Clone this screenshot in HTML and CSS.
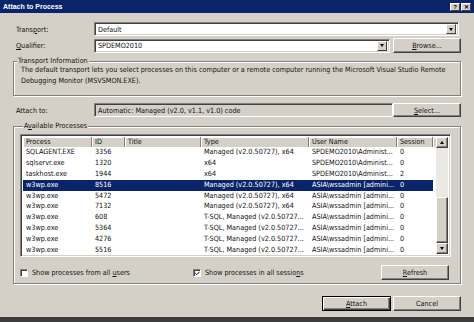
FILE: index.html
```html
<!DOCTYPE html>
<html lang="en">
<head>
    <meta charset="UTF-8">
    <title>Attach to Process</title>
    <link rel="stylesheet" href="styles.css">
</head>
<body>
    <div class="window">
        <div class="titlebar">
            <span class="title">Attach to Process</span>
            <div class="caption-btns">
                <span class="cap-btn">?</span>
                <span class="cap-btn cap-close">&#x2715;</span>
            </div>
        </div>

        <div class="dialog">
            <div class="row row-transport">
                <label class="label">Trans<u>p</u>ort:</label>
                <div class="combo combo-wide">
                    <span class="combo-text">Default</span>
                    <span class="drop"><i class="arrow-down"></i></span>
                </div>
            </div>

            <div class="row row-qualifier">
                <label class="label"><u>Q</u>ualifier:</label>
                <div class="combo combo-short">
                    <span class="combo-text">SPDEMO2010</span>
                    <span class="drop"><i class="arrow-down"></i></span>
                </div>
                <button class="btn"><u>B</u>rowse...</button>
            </div>

            <fieldset class="group group-info">
                <legend>Transport Information</legend>
                <p class="info-text">The default transport lets you select processes on this computer or a remote computer running the Microsoft Visual Studio Remote<br>Debugging Monitor (MSVSMON.EXE).</p>
            </fieldset>

            <div class="row row-attach">
                <label class="label">Attach to:</label>
                <div class="field readonly">Automatic: Managed (v2.0, v1.1, v1.0) code</div>
                <button class="btn btn-select"><u>S</u>elect...</button>
            </div>

            <fieldset class="group group-procs">
                <legend>A<u>v</u>ailable Processes</legend>
                <div class="list">
                    <div class="list-main">
                        <div class="list-head">
                            <span class="hcell">Process</span>
                            <span class="hcell">ID</span>
                            <span class="hcell">Title</span>
                            <span class="hcell">Type</span>
                            <span class="hcell">User Name</span>
                            <span class="hcell">Session</span>
                            <span class="hcell hfill"></span>
                        </div>
                        <div class="list-rows">
                            <div class="lrow"><span>SQLAGENT.EXE</span><span>3356</span><span></span><span>Managed (v2.0.50727), x64</span><span>SPDEMO2010\Administ...</span><span>0</span></div>
                            <div class="lrow"><span>sqlservr.exe</span><span>1320</span><span></span><span>x64</span><span>SPDEMO2010\Administ...</span><span>0</span></div>
                            <div class="lrow"><span>taskhost.exe</span><span>1944</span><span></span><span>x64</span><span>SPDEMO2010\Administ...</span><span>2</span></div>
                            <div class="lrow selected"><span>w3wp.exe</span><span>8516</span><span></span><span>Managed (v2.0.50727), x64</span><span>ASIA\wssadmin [admini...</span><span>0</span></div>
                            <div class="lrow"><span>w3wp.exe</span><span>5472</span><span></span><span>Managed (v2.0.50727), x64</span><span>ASIA\wssadmin [admini...</span><span>0</span></div>
                            <div class="lrow"><span>w3wp.exe</span><span>7132</span><span></span><span>Managed (v2.0.50727), x64</span><span>ASIA\wssadmin [admini...</span><span>0</span></div>
                            <div class="lrow"><span>w3wp.exe</span><span>608</span><span></span><span>T-SQL, Managed (v2.0.50727...</span><span>ASIA\wssadmin [admini...</span><span>0</span></div>
                            <div class="lrow"><span>w3wp.exe</span><span>5364</span><span></span><span>T-SQL, Managed (v2.0.50727...</span><span>ASIA\wssadmin [admini...</span><span>0</span></div>
                            <div class="lrow"><span>w3wp.exe</span><span>4276</span><span></span><span>T-SQL, Managed (v2.0.50727...</span><span>ASIA\wssadmin [admini...</span><span>0</span></div>
                            <div class="lrow"><span>w3wp.exe</span><span>5516</span><span></span><span>T-SQL, Managed (v2.0.50727...</span><span>ASIA\wssadmin [admini...</span><span>0</span></div>
                        </div>
                    </div>
                    <div class="scrollbar">
                        <span class="sb-btn"><i class="arrow-up"></i></span>
                        <span class="sb-track"></span>
                        <span class="sb-thumb"></span>
                        <span class="sb-btn"><i class="arrow-down"></i></span>
                    </div>
                </div>

                <div class="options">
                    <label class="check check-users">
                        <span class="box"></span>
                        <span>Show processes from all <u>u</u>sers</span>
                    </label>
                    <label class="check check-sessions">
                        <span class="box">
                            <svg width="7" height="7" viewBox="0 0 7 7"><path d="M0.5 3 L2.5 5 L6.5 1" fill="none" stroke="#000" stroke-width="1.4"/></svg>
                        </span>
                        <span>Show processes in all sessio<u>n</u>s</span>
                    </label>
                    <button class="btn btn-refresh"><u>R</u>efresh</button>
                </div>
            </fieldset>

            <div class="actions">
                <button class="btn btn-default"><u>A</u>ttach</button>
                <button class="btn">Cancel</button>
            </div>
        </div>

        <div class="frame-bottom"></div>
    </div>
</body>
</html>
```

FILE: styles.css
```css
body {
    margin: 0;
    padding: 0;
    font-family: "DejaVu Sans Condensed", "Liberation Sans", sans-serif;
    font-size: 7.2px;
    color: #111;
    background: #d4d0c8;
}
.window {
    width: 474px;
    height: 322px;
    background: #d4d0c8;
    display: flex;
    flex-direction: column;
    overflow: hidden;
}
.titlebar {
    height: 13px;
    background: #0a246a;
    display: flex;
    align-items: center;
    justify-content: space-between;
    padding: 0 3px 0 3px;
}
.title {
    color: #fff;
    font-family: "Liberation Sans", sans-serif;
    font-weight: bold;
    font-size: 7px;
}
.caption-btns {
    display: flex;
    gap: 1px;
}
.cap-btn {
    width: 10px;
    height: 8px;
    box-sizing: border-box;
    background: #d4d0c8;
    border: 1px solid;
    border-color: #fff #404040 #404040 #fff;
    font-family: "Liberation Sans", sans-serif;
    font-weight: bold;
    font-size: 6px;
    line-height: 6px;
    text-align: center;
    color: #000;
}
.dialog {
    flex: 1;
    padding: 9px 0 0 13px;
    width: 448px;
}
.row {
    display: flex;
    align-items: center;
}
.label {
    width: 78px;
    padding-left: 3px;
}
.row-transport {
    height: 14px;
}
.row-qualifier {
    height: 15px;
    margin-top: 2px;
}
.row-attach {
    height: 14px;
    margin-top: 7px;
}
.combo, .field {
    height: 14px;
    box-sizing: border-box;
    background: #fff;
    border: 1px solid;
    border-color: #808080 #fff #fff #808080;
    box-shadow: inset 1px 1px #404040, inset -1px -1px #d4d0c8;
    display: flex;
    align-items: center;
    padding: 2px 2px 2px 3px;
}
.combo-wide {
    width: 365px;
}
.combo-short {
    width: 296px;
}
.combo-text {
    flex: 1;
}
.drop {
    width: 10px;
    height: 10px;
    box-sizing: border-box;
    background: #d4d0c8;
    border: 1px solid;
    border-color: #fff #404040 #404040 #fff;
    display: flex;
    align-items: center;
    justify-content: center;
}
.arrow-down, .arrow-up {
    width: 0;
    height: 0;
    border-left: 2.5px solid transparent;
    border-right: 2.5px solid transparent;
}
.arrow-down {
    border-top: 3px solid #000;
}
.arrow-up {
    border-bottom: 3px solid #000;
}
.field {
    width: 299px;
}
.field.readonly {
    background: #d4d0c8;
}
.btn {
    font: inherit;
    color: #111;
    height: 15px;
    width: 68px;
    box-sizing: border-box;
    background: #d4d0c8;
    border: 1px solid;
    border-color: #fff #404040 #404040 #fff;
    box-shadow: inset -1px -1px #808080;
    padding: 0;
    margin: 0;
}
.row-qualifier .btn {
    margin-left: 3px;
}
.btn-select {
    height: 14px;
}
.group {
    margin: 0;
    padding: 0;
    min-inline-size: 0;
    width: 448px;
    box-sizing: border-box;
    border: 1px solid #808080;
    box-shadow: inset 1px 1px #fff, 1px 1px #fff;
}
.group legend {
    margin-left: 3px;
    padding: 0 1px;
    line-height: 10px;
    background: #d4d0c8;
}
.group-info {
    margin-top: 3px;
    height: 40px;
}
.info-text {
    margin: -2px 0 0 7px;
    line-height: 11px;
}
.group-procs {
    margin-top: 4px;
    height: 163px;
    padding: 3px 9px 0 6px;
}
.list {
    display: flex;
    height: 123px;
    box-sizing: border-box;
    background: #fff;
    border: 1px solid;
    border-color: #808080 #fff #fff #808080;
    box-shadow: inset 1px 1px #404040, inset -1px -1px #d4d0c8;
    padding: 2px 2px 2px 2px;
}
.list-main {
    flex: 1;
    overflow: hidden;
}
.list-head {
    display: grid;
    grid-template-columns: 69px 33px 76px 108px 88px 36px 1fr;
    height: 10px;
}
.hcell {
    background: #d4d0c8;
    border-right: 1px solid #808080;
    box-shadow: inset 1px 1px #fff;
    padding-left: 3px;
    line-height: 10px;
    white-space: nowrap;
    overflow: hidden;
}
.hfill {
    border-right: none;
}
.lrow {
    display: grid;
    grid-template-columns: 69px 33px 76px 108px 88px 36px;
    height: 10.9px;
    line-height: 10.9px;
    width: 410px;
}
.lrow span {
    padding-left: 3px;
    white-space: nowrap;
    overflow: hidden;
}
.lrow.selected {
    background: #0a246a;
    color: #fff;
}
.scrollbar {
    width: 12px;
    display: flex;
    flex-direction: column;
}
.sb-btn, .sb-thumb {
    box-sizing: border-box;
    background: #d4d0c8;
    border: 1px solid;
    border-color: #fff #404040 #404040 #fff;
    box-shadow: inset -1px -1px #808080;
    display: flex;
    align-items: center;
    justify-content: center;
}
.sb-btn {
    height: 11px;
}
.sb-track {
    height: 49px;
    background: #ebe9e4;
}
.sb-thumb {
    flex: 1;
}
.options {
    display: flex;
    align-items: center;
    height: 15px;
    margin-top: 8px;
}
.check {
    display: flex;
    align-items: center;
    gap: 4px;
}
.check-users {
    width: 173px;
}
.check-sessions {
    width: 188px;
}
.box {
    width: 8px;
    height: 8px;
    box-sizing: border-box;
    background: #fff;
    border: 1px solid;
    border-color: #808080 #fff #fff #808080;
    box-shadow: inset 1px 1px #404040;
    display: flex;
    align-items: center;
    justify-content: center;
}
.box svg {
    display: block;
    margin: 1px 0 0 1px;
}
.actions {
    display: flex;
    justify-content: flex-end;
    gap: 2px;
    margin-top: 12px;
}
.btn-default {
    width: 69px;
    border: 1px solid #000;
    box-shadow: inset 1px 1px #fff, inset -1px -1px #404040, inset -2px -2px #808080;
}
.frame-bottom {
    height: 5px;
    background: #3c3c3c;
}
```
